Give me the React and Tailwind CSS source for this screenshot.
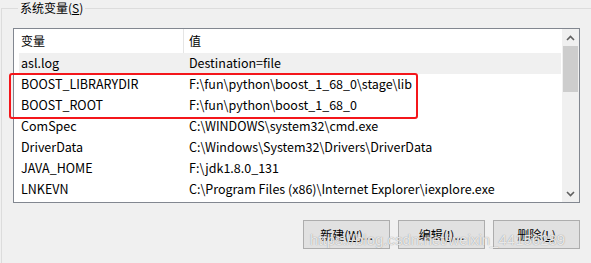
import React from 'react';

const rows = [
  ['asl.log', 'Destination=file'],
  ['BOOST_LIBRARYDIR', 'F:\\fun\\python\\boost_1_68_0\\stage\\lib'],
  ['BOOST_ROOT', 'F:\\fun\\python\\boost_1_68_0'],
  ['ComSpec', 'C:\\WINDOWS\\system32\\cmd.exe'],
  ['DriverData', 'C:\\Windows\\System32\\Drivers\\DriverData'],
  ['JAVA_HOME', 'F:\\jdk1.8.0_131'],
  ['LNKEVN', 'C:\\Program Files (x86)\\Internet Explorer\\iexplore.exe'],
];

function Chevron({ down }) {
  return (
    <svg width="9" height="6" viewBox="0 0 9 6" className="block">
      <polyline
        points={down ? '1,1 4.5,4.5 8,1' : '1,5 4.5,1.5 8,5'}
        fill="none"
        stroke="#606060"
        strokeWidth="1.6"
      />
    </svg>
  );
}

function Button({ label, mnemonic, rest }) {
  return (
    <button className="w-[87px] h-[29px] bg-[#e1e1e1] border border-[#adadad] text-[12px] text-black flex items-center justify-center">
      {label}(<span className="underline">{mnemonic}</span>){rest}
    </button>
  );
}

export default function App() {
  return (
    <div
      className="relative w-[591px] h-[263px] bg-[#f0f0f0] overflow-hidden text-black"
      style={{ fontFamily: '"Noto Sans CJK SC", "Noto Sans", sans-serif' }}
    >
      <fieldset className="ml-[1px] w-[620px] h-[300px] border-t border-l border-[#dcdcdc] pl-[11px] pt-[12px]">
        <legend className="ml-[5px] px-[2px] text-[12px] leading-[16px]">
          系统变量(<span className="underline">S</span>)
        </legend>

        {/* list */}
        <div className="w-[567px] h-[175px] border border-[#828790] bg-white flex">
          <div className="flex-1 flex flex-col">
            <div className="h-[24px] flex text-[12px] items-center">
              <div className="w-[170px] pl-[7px] border-r border-[#e5e5e5] h-full flex items-center">变量</div>
              <div className="pl-[5px]">值</div>
            </div>
            {rows.map(([k, v], i) => (
              <div
                key={k}
                className={`h-[21px] flex items-center text-[12.5px] ml-[5px] ${i === 0 ? 'bg-[#f0f0f0]' : ''}`}
              >
                <div className="w-[164px] pl-[2px] whitespace-nowrap">{k}</div>
                <div className="pl-[6px] whitespace-nowrap">{v}</div>
              </div>
            ))}
          </div>
          {/* scrollbar */}
          <div className="w-[17px] ml-[1px] bg-[#f0f0f0] flex flex-col">
            <div className="h-[17px] flex items-center justify-center">
              <Chevron />
            </div>
            <div className="h-[46px] mx-[1px] bg-[#cdcdcd]" />
            <div className="flex-1" />
            <div className="h-[17px] flex items-center justify-center">
              <Chevron down />
            </div>
          </div>
        </div>

        {/* buttons */}
        <div className="w-[567px] mt-[17px] flex justify-end gap-[8px]">
          <Button label="新建" mnemonic="W" rest="..." />
          <Button label="编辑" mnemonic="I" rest="..." />
          <Button label="删除" mnemonic="L" rest="" />
        </div>
      </fieldset>

      {/* annotation */}
      <div className="absolute left-[9px] top-[73px] w-[409px] h-[46px] border-2 border-[#f4161b] rounded-[3px]" />

      {/* watermark */}
      <div
        className="absolute left-[310px] top-[231px] text-[15px] leading-[18px] text-white/80 whitespace-nowrap [text-shadow:0_0_1px_#7a7a7a]"
        style={{ fontFamily: '"Liberation Sans", sans-serif' }}
      >
        https://blog.csdn.net/weixin_44156289
      </div>
    </div>
  );
}
